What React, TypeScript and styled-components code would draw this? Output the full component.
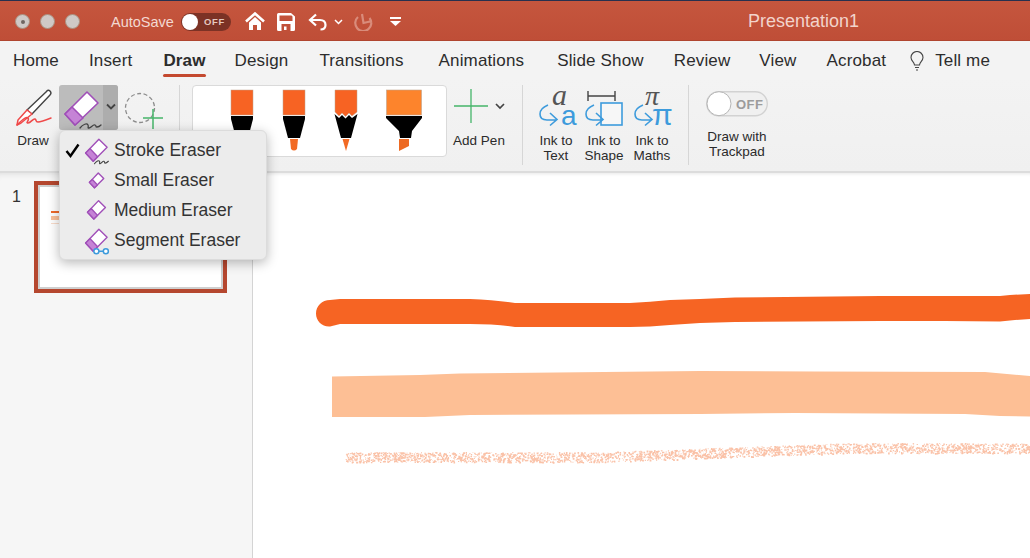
import React from 'react';
import styled, { createGlobalStyle } from 'styled-components';

const GlobalStyle = createGlobalStyle`
  html, body { margin: 0; padding: 0; background: #fff; }
  body { font-family: "Liberation Sans", Arial, sans-serif; }
`;

// shift is the tab's small correction to the 31px gap of the bar
const TABS = [
  { name: 'Home', shift: 0 },
  { name: 'Insert', shift: -1 },
  { name: 'Draw', shift: 0 },
  { name: 'Design', shift: -2 },
  { name: 'Transitions', shift: 0 },
  { name: 'Animations', shift: 4 },
  { name: 'Slide Show', shift: 2 },
  { name: 'Review', shift: -1 },
  { name: 'View', shift: -2 },
  { name: 'Acrobat', shift: -1 },
];

const Page = styled.div`
  position: relative;
  width: 1030px;
  height: 558px;
  overflow: hidden;
  display: flex;
  flex-direction: column;
`;

const TitleBar = styled.div`
  height: 41px;
  flex: none;
  display: flex;
  align-items: center;
  padding: 2px 0 0 15px;
  box-sizing: border-box;
  background: linear-gradient(#c5563e, #bf4e37);
  border-top: 1px solid #27304e;
  border-bottom: 1px solid #b0452f;
  color: #fff;
`;

const Lights = styled.div`
  display: flex;
  gap: 10px;
`;

const Light = styled.div<{ $dot?: boolean }>`
  width: 15px;
  height: 15px;
  border-radius: 50%;
  background: #cfc9c6;
  border: 1px solid #a9907f;
  box-sizing: border-box;
  display: flex;
  align-items: center;
  justify-content: center;
  &::after {
    content: "";
    display: ${(p) => (p.$dot ? 'block' : 'none')};
    width: 4px;
    height: 4px;
    border-radius: 50%;
    background: #6f6661;
  }
`;

const AutoSave = styled.span`
  margin-left: 31px;
  width: 63px;
  font-size: 14.5px;
  white-space: nowrap;
  color: #f3d9d2;
`;

const SaveToggle = styled.div`
  margin-left: 7px;
  width: 50px;
  height: 18px;
  border-radius: 9px;
  background: #7c3225;
  display: flex;
  align-items: center;
  padding-left: 1px;
  box-sizing: border-box;
  font-size: 9.5px;
  font-weight: 700;
  letter-spacing: 0.6px;
  color: #e4c7bf;
  &::before {
    content: "";
    width: 16px;
    height: 16px;
    border-radius: 50%;
    background: #fff;
    margin-right: 6px;
  }
`;

const QatIcon = styled.svg<{ $gap: number }>`
  margin-left: ${(p) => p.$gap}px;
  flex: none;
  display: block;
`;

const DocTitle = styled.span`
  margin-left: auto;
  padding-right: 171px;
  font-size: 18px;
  color: #f2d4cb;
`;

const TabBar = styled.div`
  height: 37px;
  flex: none;
  display: flex;
  align-items: center;
  gap: 31px;
  padding: 3px 0 0 13px;
  box-sizing: border-box;
  background: #f3f3f3;
  font-size: 17px;
  letter-spacing: 0.15px;
  color: #2c2c2c;
`;

const Tab = styled.span<{ $active?: boolean; $shift: number }>`
  position: relative;
  margin-left: ${(p) => p.$shift}px;
  font-weight: ${(p) => (p.$active ? 700 : 400)};
  &::after {
    content: "";
    display: ${(p) => (p.$active ? 'block' : 'none')};
    position: absolute;
    left: 0;
    right: 0;
    bottom: -6px;
    height: 3px;
    border-radius: 2px;
    background: #c4492f;
  }
`;

const TellMe = styled.div`
  display: flex;
  align-items: center;
  gap: 11px;
  margin-left: -7px;
`;

const Ribbon = styled.div`
  height: 95px;
  flex: none;
  display: flex;
  align-items: flex-start;
  padding: 7px 0 0 14px;
  box-sizing: border-box;
  background: linear-gradient(#f3f3f3, #f0f0f0);
  border-bottom: 2px solid #dcdcdc;
`;

const Label = styled.div`
  font-size: 13.5px;
  line-height: 15px;
  color: #2b2b2b;
  text-align: center;
  white-space: nowrap;
`;

const ToolColumn = styled.div<{ $width: number; $ml?: number }>`
  width: ${(p) => p.$width}px;
  margin-left: ${(p) => p.$ml ?? 0}px;
  flex: none;
  display: flex;
  flex-direction: column;
  align-items: center;
`;

const IconSlot = styled.div<{ $h: number }>`
  height: ${(p) => p.$h}px;
  display: flex;
  align-items: flex-start;
  justify-content: center;
`;

const EraserSplit = styled.div`
  width: 59px;
  height: 45px;
  margin-left: 7px;
  flex: none;
  display: flex;
  border-radius: 3px;
  overflow: hidden;
  background: #bcbcbc;
`;

const EraserFace = styled.div`
  width: 44px;
  display: flex;
  align-items: center;
  padding: 1px 0 0 5px;
  box-sizing: border-box;
`;

const EraserArrow = styled.div`
  flex: 1;
  background: #adadad;
  display: flex;
  align-items: center;
  justify-content: center;
  padding-bottom: 2px;
`;

const Separator = styled.div<{ $ml: number }>`
  width: 1px;
  height: 80px;
  margin-left: ${(p) => p.$ml}px;
  flex: none;
  background: #d6d6d6;
`;

const PenGallery = styled.div`
  width: 255px;
  height: 72px;
  margin-left: 12px;
  flex: none;
  display: flex;
  gap: 28px;
  padding-left: 37px;
  box-sizing: border-box;
  background: #fff;
  border: 1px solid #dadada;
  border-radius: 4px;
`;

const Workspace = styled.div`
  flex: 1;
  display: flex;
  min-height: 0;
`;

const Sidebar = styled.div`
  width: 253px;
  flex: none;
  display: flex;
  align-items: flex-start;
  gap: 14px;
  padding: 8px 0 0 12px;
  box-sizing: border-box;
  background: #f6f6f6;
  border-right: 1px solid #d4d4d4;
  box-shadow: inset 0 6px 6px -6px #d5d5d5;
`;

const SlideNumber = styled.span`
  width: 8px;
  padding-top: 7px;
  font-size: 16px;
  color: #333;
`;

const Thumb = styled.div`
  width: 193px;
  height: 112px;
  box-sizing: border-box;
  border: 4px solid #b5472f;
  background: #fff;
  box-shadow: inset 0 0 0 2px #cfcfcf;
  padding: 26px 0 0 13px;
  display: flex;
  flex-direction: column;
  gap: 3px;
`;

const ThumbStroke = styled.div<{ $color: string; $h: number }>`
  width: 60px;
  height: ${(p) => p.$h}px;
  background: ${(p) => p.$color};
`;

const Canvas = styled.div`
  flex: 1;
  background: #fff;
  box-shadow: inset 0 4px 4px -4px #dcdcdc;
`;

const CanvasArt = styled.svg`
  display: block;
  width: 100%;
  height: 100%;
`;

const EraserMenu = styled.div`
  position: absolute;
  left: 59px;
  top: 130px;
  width: 208px;
  height: 130px;
  padding: 4px 0;
  box-sizing: border-box;
  background: #ececec;
  border-radius: 6px;
  border: 1px solid #dcdcdc;
  box-shadow: 0 3px 12px rgba(0, 0, 0, 0.28);
`;

const MenuRow = styled.div`
  height: 30px;
  display: flex;
  align-items: center;
  font-size: 17.5px;
  color: #333;
`;

const CheckSlot = styled.div`
  width: 24px;
  padding-left: 5px;
  box-sizing: border-box;
  display: flex;
`;

const MenuIconSlot = styled.div`
  width: 26px;
  margin-right: 4px;
  display: flex;
  justify-content: center;
`;

const PURPLE = '#c583d6';
const PURPLE_EDGE = '#a04fb8';
const BLUE = '#3d9bdc';

function Eraser({ size, squiggle, chain }: { size: number; squiggle?: boolean; chain?: boolean }) {
  return (
    <svg width={size} height={(size * 44) / 38} viewBox="0 0 38 44" overflow="visible">
      <polygon points="1,27 22,5 35,18 13,40" fill="#fff" stroke={PURPLE_EDGE} strokeWidth="1.4" strokeLinejoin="round" vectorEffect="non-scaling-stroke" />
      <polygon points="1,27 8,20 20,33 13,40" fill={PURPLE} stroke={PURPLE_EDGE} strokeWidth="1.4" strokeLinejoin="round" vectorEffect="non-scaling-stroke" />
      {squiggle && (
        <path d="M15 44c3-4 7-6 8-4s-1 4 1 4 4-5 6-4 0 3 2 3 4-2 5-3" fill="none" stroke="#444" strokeWidth="1.1" strokeLinecap="round" vectorEffect="non-scaling-stroke" />
      )}
      {chain && (
        <g fill="#fff" stroke={BLUE} strokeWidth="1.5">
          <circle cx="18" cy="40" r="4" vectorEffect="non-scaling-stroke" />
          <line x1="22" y1="40" x2="29" y2="40" vectorEffect="non-scaling-stroke" />
          <circle cx="33" cy="40" r="4" vectorEffect="non-scaling-stroke" />
        </g>
      )}
    </svg>
  );
}

function Chevron({ color = '#444' }: { color?: string }) {
  return (
    <svg width="10" height="7" viewBox="0 0 10 7">
      <path d="M1 1.5l4 4 4-4" fill="none" stroke={color} strokeWidth="1.8" />
    </svg>
  );
}

function InkArrow({ dx }: { dx: number }) {
  return (
    <path
      transform={`translate(${dx} 0)`}
      d="M14 20C9 22 6 25 6 29s3 6 7 6h10M16 28l7 6.500-7 6"
      fill="none"
      stroke={BLUE}
      strokeWidth="1.6"
    />
  );
}

function Pen({ kind }: { kind: 'pen' | 'ball' | 'pencil' | 'marker' }) {
  if (kind === 'marker') {
    return (
      <svg width="36" height="70" viewBox="0 0 36 70">
        <rect x="0.5" y="4" width="35" height="25" fill="#fd842c" stroke="#bfa58f" strokeWidth="0.6" />
        <path d="M0 30h36v2L26 45l-1 7H14l-1-7L0 32z" fill="#000" />
        <path d="M13 53h10v7l-10 5z" fill="#ed6a23" />
      </svg>
    );
  }
  if (kind === 'pencil') {
    return (
      <svg width="24" height="70" viewBox="0 0 24 70">
        <path d="M1 4h22v22l-5 4-3-3-3.5 3.5L8 27l-3 3-4-4z" fill="#f76323" stroke="#bfa58f" strokeWidth="0.5" />
        <path d="M0.5 28l4.5 4 3-3 3.5 3.5L15 29l3 3 5.500-4L17 52H7z" fill="#000" />
        <path d="M8.500 53h7L12 65z" fill="#f26a24" />
      </svg>
    );
  }
  if (kind === 'ball') {
    return (
      <svg width="24" height="70" viewBox="0 0 24 70">
        <rect x="1" y="4" width="22" height="25" fill="#f76323" stroke="#bfa58f" strokeWidth="0.5" />
        <path d="M1 30h22v3l-5 19H6L1 33z" fill="#000" />
        <path d="M8 53h8l-1 10q-3 3-6 0z" fill="#f26a24" />
      </svg>
    );
  }
  return (
    <svg width="24" height="70" viewBox="0 0 24 70">
      <rect x="1" y="4" width="22" height="25" fill="#f76323" stroke="#bfa58f" strokeWidth="0.5" />
      <path d="M1 30h22v3l-5 19H6L1 33z" fill="#000" />
    </svg>
  );
}

function makeRandom(seed: number) {
  let a = seed;
  return () => {
    a = (a + 0x6d2b79f5) | 0;
    let t = Math.imul(a ^ (a >>> 15), 1 | a);
    t = (t + Math.imul(t ^ (t >>> 7), 61 | t)) ^ t;
    return ((t ^ (t >>> 14)) >>> 0) / 4294967296;
  };
}

function pencilY(x: number) {
  if (x < 600) return 457;
  if (x < 850) return 457 - ((x - 600) / 250) * 9;
  return 448;
}

function pencilDots() {
  const rand = makeRandom(42);
  let d = '';
  for (let i = 0; i < 3000; i++) {
    const x = 345 + rand() * 685;
    const y = pencilY(x) + (rand() - 0.5) * 10;
    const s = 0.6 + rand() * 1.2;
    d += `M${x.toFixed(1)} ${y.toFixed(1)}h${s.toFixed(1)}v${s.toFixed(1)}h-${s.toFixed(1)}z`;
  }
  return d;
}

const PENCIL_PATH = pencilDots();

export default function App() {
  return (
    <Page>
      <GlobalStyle />
      <TitleBar>
        <Lights>
          <Light $dot />
          <Light />
          <Light />
        </Lights>
        <AutoSave>AutoSave</AutoSave>
        <SaveToggle>OFF</SaveToggle>
        <QatIcon $gap={14} width="20" height="19" viewBox="0 0 20 19">
          <path d="M1 9.500L10 1.500l9 8" fill="none" stroke="#fff" strokeWidth="2.600" />
          <path d="M4 10.500L10 5l6 5.500V18h-4v-5H8v5H4z" fill="#fff" />
        </QatIcon>
        <QatIcon $gap={12} width="18" height="18" viewBox="0 0 18 18">
          <path fillRule="evenodd" d="M1.500 0H14l4 3.500V16.500A1.500 1.500 0 0 1 16.500 18h-15A1.500 1.500 0 0 1 0 16.500v-15A1.500 1.500 0 0 1 1.500 0zM2.500 2.500V8h13V3.500l-1-1zM4.500 11v7h9v-7zM7 13.500h2.500V17H7z" fill="#fff" />
        </QatIcon>
        <QatIcon $gap={13} width="19" height="18" viewBox="0 0 19 18">
          <path d="M8 1.500L2 7l6 5.500M2 7h10c3.500 0 5.500 2 5.500 5s-2 4.500-5 4.500" fill="none" stroke="#fff" strokeWidth="2.200" />
        </QatIcon>
        <QatIcon $gap={7} width="9" height="6" viewBox="0 0 9 6">
          <path d="M1 1l3.500 3.500L8 1" fill="none" stroke="#fff" strokeWidth="1.500" />
        </QatIcon>
        <QatIcon $gap={11} width="19" height="18" viewBox="0 0 19 18">
          <path d="M4 4A8 8 0 1 0 15.500 5M8 1l1.500 9 8.500-2" fill="none" stroke="#d98c7b" strokeWidth="2.200" />
        </QatIcon>
        <QatIcon $gap={17} width="11" height="9" viewBox="0 0 11 9">
          <rect x="0" y="0" width="11" height="2" fill="#fff" />
          <path d="M0 4h11L5.500 9z" fill="#fff" />
        </QatIcon>
        <DocTitle>Presentation1</DocTitle>
      </TitleBar>

      <TabBar>
        {TABS.map((t) => (
          <Tab key={t.name} $active={t.name === 'Draw'} $shift={t.shift}>{t.name}</Tab>
        ))}
        <TellMe>
          <svg width="14" height="20" viewBox="0 0 14 20">
            <path d="M4.500 14c0-3-3.500-4-3.500-7.500a6 6 0 0 1 12 0C13 10 9.500 11 9.500 14zM5 16.500h4M6 19h2" fill="none" stroke="#444" strokeWidth="1.100" />
          </svg>
          <span>Tell me</span>
        </TellMe>
      </TabBar>

      <Ribbon>
        <ToolColumn $width={38}>
          <IconSlot $h={48}>
            <svg width="40" height="44" viewBox="0 0 40 44">
              <path d="M33 7Q35 4 37 6T37 10L19 29l-5-4z" fill="#fff" stroke="#444" strokeWidth="1.400" strokeLinejoin="round" />
              <path d="M14 25l5 4L8 38l-4 2 1-5z" fill="#fff" stroke="#ef4a4a" strokeWidth="1.500" strokeLinejoin="round" />
              <path d="M4 40C8 36 13 31 15 33S12 38 15 38 20 33 22 34 22 37 25 37 33 35 38 33" fill="none" stroke="#ef4a4a" strokeWidth="1.500" strokeLinecap="round" />
            </svg>
          </IconSlot>
          <Label>Draw</Label>
        </ToolColumn>

        <EraserSplit>
          <EraserFace>
            <svg width="38" height="44" viewBox="0 0 38 44">
              <polygon points="1,28 23,6 34,17 11,39" fill="#fff" stroke={PURPLE_EDGE} strokeWidth="1.600" strokeLinejoin="round" />
              <polygon points="1,28 8,21 19,32 11,39" fill={PURPLE} stroke={PURPLE_EDGE} strokeWidth="1.600" strokeLinejoin="round" />
              <path d="M16 42c3-4 7-5 8-3s-1 3 1 3 4-4 6-3 0 2 2 2 3-1 4-2" fill="none" stroke="#444" strokeWidth="1.300" strokeLinecap="round" />
            </svg>
          </EraserFace>
          <EraserArrow>
            <Chevron />
          </EraserArrow>
        </EraserSplit>

        <ToolColumn $width={42} $ml={6}>
          <svg width="42" height="44" viewBox="0 0 42 44">
            <circle cx="16" cy="23" r="14.500" fill="none" stroke="#8c8c8c" strokeWidth="1.300" strokeDasharray="4 2.500" />
            <path d="M29 24v20M19 33h20" stroke="#45b56a" strokeWidth="1.500" />
          </svg>
        </ToolColumn>

        <Separator $ml={13} />

        <PenGallery>
          <Pen kind="pen" />
          <Pen kind="ball" />
          <Pen kind="pencil" />
          <Pen kind="marker" />
        </PenGallery>

        <ToolColumn $width={56} $ml={4}>
          <IconSlot $h={48}>
            <svg width="56" height="40" viewBox="0 0 56 40">
              <path d="M20 4v34M3 21h34" stroke="#45b56a" strokeWidth="1.300" />
              <path d="M45 19l4 4 4-4" fill="none" stroke="#444" strokeWidth="1.700" />
            </svg>
          </IconSlot>
          <Label>Add Pen</Label>
        </ToolColumn>

        <Separator $ml={15} />

        <ToolColumn $width={44} $ml={11}>
          <IconSlot $h={48}>
            <svg width="44" height="44" viewBox="0 0 44 44" overflow="visible">
              <text x="18" y="20" fontFamily="'Liberation Serif', serif" fontStyle="italic" fontSize="30" fill="#555">a</text>
              <text x="27" y="40" fontFamily="'Liberation Sans', sans-serif" fontSize="28" fill={BLUE}>a</text>
              <InkArrow dx={0} />
            </svg>
          </IconSlot>
          <Label>Ink to</Label>
          <Label>Text</Label>
        </ToolColumn>

        <ToolColumn $width={44} $ml={4}>
          <IconSlot $h={48}>
            <svg width="44" height="44" viewBox="0 0 44 44">
              <path d="M6 6v10M33 6v10M6 11h27" fill="none" stroke="#444" strokeWidth="1.400" />
              <rect x="19" y="18" width="21" height="22" fill="#f7f7f7" stroke={BLUE} strokeWidth="1.600" />
              <InkArrow dx={-2} />
            </svg>
          </IconSlot>
          <Label>Ink to</Label>
          <Label>Shape</Label>
        </ToolColumn>

        <ToolColumn $width={44} $ml={4}>
          <IconSlot $h={48}>
            <svg width="44" height="44" viewBox="0 0 44 44" overflow="visible">
              <text x="15" y="20" fontFamily="'Liberation Serif', serif" fontStyle="italic" fontSize="28" fill="#555">π</text>
              <text x="22" y="40" fontFamily="'Liberation Sans', sans-serif" fontSize="30" fill={BLUE}>π</text>
              <InkArrow dx={-1} />
            </svg>
          </IconSlot>
          <Label>Ink to</Label>
          <Label>Maths</Label>
        </ToolColumn>

        <Separator $ml={14} />

        <ToolColumn $width={70} $ml={13}>
          <IconSlot $h={44}>
            <svg width="62" height="34" viewBox="0 0 62 34">
              <rect x="0.700" y="6.700" width="60.600" height="24" rx="12" fill="#f0f0f0" stroke="#d2d2d2" strokeWidth="1.400" />
              <circle cx="13" cy="18.700" r="12" fill="#fff" stroke="#b5b5b5" strokeWidth="1" />
              <text x="30" y="23.500" fontFamily="'Liberation Sans', sans-serif" fontWeight="700" fontSize="13" letterSpacing="0.500" fill="#9c9c9c">OFF</text>
            </svg>
          </IconSlot>
          <Label>Draw with</Label>
          <Label>Trackpad</Label>
        </ToolColumn>
      </Ribbon>

      <Workspace>
        <Sidebar>
          <SlideNumber>1</SlideNumber>
          <Thumb>
            <ThumbStroke $color="#ef6a2a" $h={2} />
            <ThumbStroke $color="#fbc19a" $h={4} />
            <ThumbStroke $color="#f9dccb" $h={1} />
          </Thumb>
        </Sidebar>
        <Canvas>
          <CanvasArt viewBox="253 173 777 385" preserveAspectRatio="none">
            <path
              d="M316 313.500C316 306 322 300 330 300L340 299L470 299Q495 300 515 303L630 303Q650 302 670 300L700 299L735 297.500L880 296L1000 296L1010 295L1030 294L1030 319L1015 320L1000 321.500L945 321L880 321L735 322L700 323L670 325Q650 327 630 327L515 327Q495 324 470 324L340 324L330 326.500C322 327 316 321 316 313.500Z"
              fill="#f66423"
            />
            <path
              d="M332 376.500L420 375L460 373.500L700 371L815 371.500L985 372L1030 376L1030 416.500L1000 416L965 414L795 413L700 414L470 415L425 417L332 417Z"
              fill="#fdbf95"
            />
            <path d={PENCIL_PATH} fill="#f58f60" fillOpacity="0.55" />
          </CanvasArt>
        </Canvas>
      </Workspace>

      <EraserMenu>
        <MenuRow>
          <CheckSlot>
            <svg width="15" height="15" viewBox="0 0 15 15">
              <path d="M1.500 8l4 5L13.500 1.500" fill="none" stroke="#000" strokeWidth="2.400" />
            </svg>
          </CheckSlot>
          <MenuIconSlot><Eraser size={24} squiggle /></MenuIconSlot>
          Stroke Eraser
        </MenuRow>
        <MenuRow>
          <CheckSlot />
          <MenuIconSlot><Eraser size={16} /></MenuIconSlot>
          Small Eraser
        </MenuRow>
        <MenuRow>
          <CheckSlot />
          <MenuIconSlot><Eraser size={20} /></MenuIconSlot>
          Medium Eraser
        </MenuRow>
        <MenuRow>
          <CheckSlot />
          <MenuIconSlot><Eraser size={24} chain /></MenuIconSlot>
          Segment Eraser
        </MenuRow>
      </EraserMenu>
    </Page>
  );
}
